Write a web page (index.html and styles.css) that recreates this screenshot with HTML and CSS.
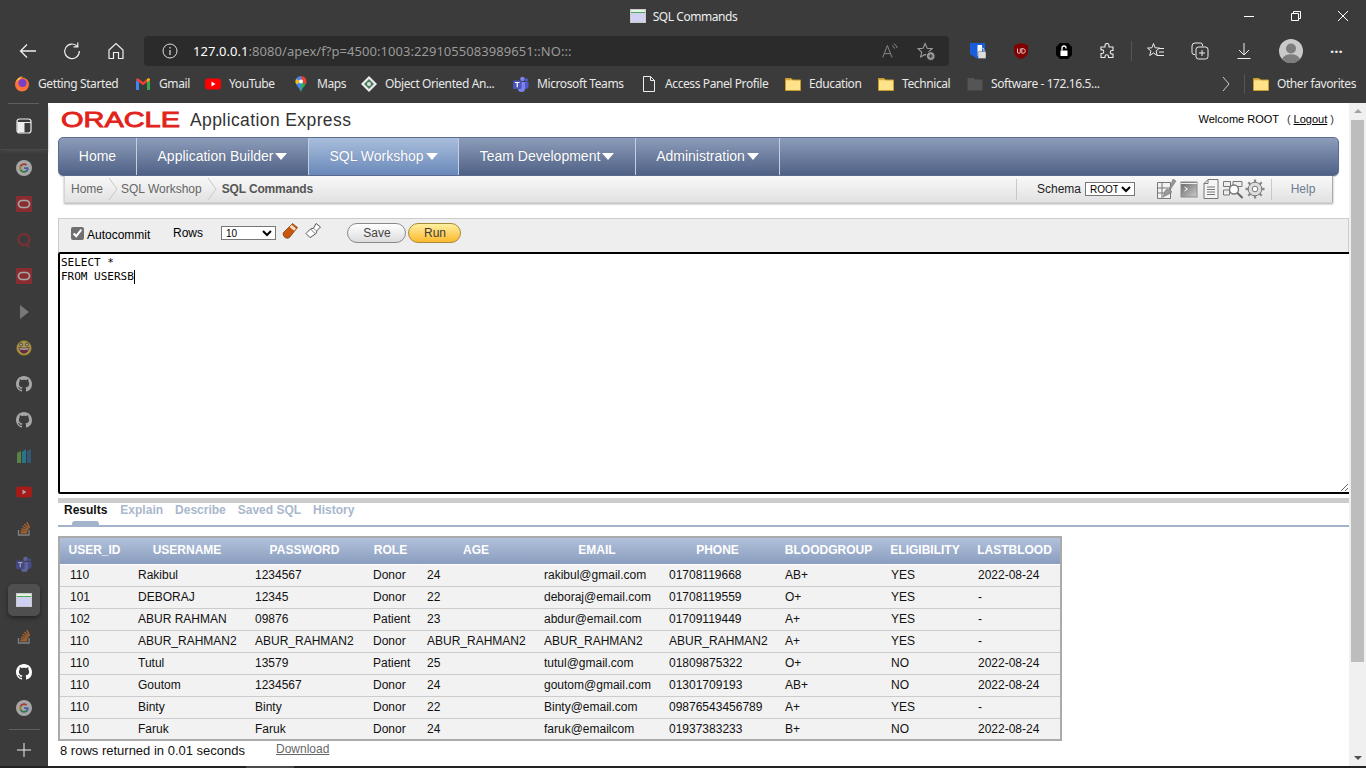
FILE: index.html
```html
<!DOCTYPE html>
<html lang="en">
<head>
<meta charset="utf-8">
<title>SQL Commands</title>
<link rel="stylesheet" href="styles.css">
</head>
<body>
<svg class="defs" width="0" height="0" aria-hidden="true">
  <defs>
    <symbol id="gh" viewBox="0 0 16 16"><path fill="#fff" d="M8 0C3.58 0 0 3.58 0 8c0 3.54 2.29 6.53 5.47 7.59.4.07.55-.17.55-.38 0-.19-.01-.82-.01-1.49-2.01.37-2.53-.49-2.69-.94-.09-.23-.48-.94-.82-1.13-.28-.15-.68-.52-.01-.53.63-.01 1.08.58 1.23.82.72 1.21 1.87.87 2.33.66.07-.52.28-.87.51-1.07-1.78-.2-3.64-.89-3.64-3.95 0-.87.31-1.59.82-2.15-.08-.2-.36-1.02.08-2.12 0 0 .67-.21 2.2.82.64-.18 1.32-.27 2-.27.68 0 1.36.09 2 .27 1.53-1.04 2.2-.82 2.2-.82.44 1.1.16 1.92.08 2.12.51.56.82 1.27.82 2.15 0 3.07-1.87 3.75-3.65 3.95.29.25.54.73.54 1.48 0 1.07-.01 1.93-.01 2.2 0 .21.15.46.55.38A8.013 8.013 0 0016 8c0-4.42-3.58-8-8-8z"/></symbol>
    <symbol id="ora" viewBox="0 0 16 16"><rect width="16" height="16" fill="#c8232c"/><rect x="2.5" y="4.5" width="11" height="7" rx="3.5" fill="none" stroke="#fff" stroke-width="1.7"/></symbol>
    <symbol id="goog" viewBox="0 0 16 16"><circle cx="8" cy="8" r="8" fill="#fff"/><path d="M12.6 8.2c0-.4 0-.7-.1-1H8v1.9h2.6c-.1.6-.5 1.2-1 1.5l1.6 1.2c.9-.9 1.4-2.1 1.4-3.6z" fill="#4285f4"/><path d="M8 12.8c1.3 0 2.4-.4 3.2-1.2l-1.6-1.2c-.4.3-1 .5-1.6.5-1.2 0-2.3-.8-2.7-2L3.700 10.100C4.500 11.700 6.100 12.800 8 12.800z" fill="#34a853"/><path d="M5.300 8.900c-.2-.6-.2-1.200 0-1.800L3.700 5.900c-.7 1.300-.7 2.900 0 4.200z" fill="#fbbc05"/><path d="M8 5.100c.7 0 1.300.2 1.800.7l1.400-1.400C10.300 3.600 9.200 3.200 8 3.200c-1.900 0-3.500 1.100-4.300 2.700l1.600 1.200c.4-1.200 1.500-2 2.700-2z" fill="#ea4335"/></symbol>
    <symbol id="so" viewBox="0 0 16 16"><path d="M2.500 10v5h10.500v-5" fill="none" stroke="#bcbbbb" stroke-width="1.300"/><path d="M4.500 12.800h6.500M4.700 10.800l6.400.8M5.300 8.600l6.200 1.800M6.500 6.200l5.600 3.300M8.400 4l4.500 4.500M10.800 2.200l2.900 5.400" fill="none" stroke="#f48024" stroke-width="1.400"/></symbol>
    <symbol id="folder" viewBox="0 0 16 16"><path d="M.5 2.500h5.500l1.500 1.500h8v10.500H.5z" fill="#ffe38b" stroke="#c99a2e"/><path d="M1 2.800h4.800l1.500 1.500H1z" fill="#d9a93a"/></symbol>
    <symbol id="win" viewBox="0 0 16 16"><rect x=".5" y="1.500" width="15" height="13" fill="#d8d8ee" stroke="#c9c9c9"/><rect x="1" y="2" width="14" height="2" fill="#e6f2e2"/><rect x="1" y="4" width="14" height="1" fill="#4ea65a"/><rect x="1.500" y="5" width="13" height="9" fill="#d0d0f2"/></symbol>
    <symbol id="teams" viewBox="0 0 16 16"><circle cx="9.500" cy="3" r="2.300" fill="#7b83eb"/><circle cx="13.500" cy="4" r="1.700" fill="#5059c9"/><path d="M11 6h4.500v4.500a2.500 2.500 0 01-4.500 1.500z" fill="#5059c9"/><path d="M5 6h7v6.500a3.500 3.500 0 01-7 0z" fill="#7b83eb"/><rect x="0" y="4.500" width="8.500" height="8.500" rx="1" fill="#4b53bc"/><path d="M2 6.500h4.500M4.250 6.500v4.800" stroke="#fff" stroke-width="1.200"/></symbol>
  </defs>
</svg>

<div class="app">
  <header class="titlebar">
    <div class="title-center">
      <svg class="ico16" viewBox="0 0 16 16"><use href="#win"/></svg>
      <span>SQL Commands</span>
    </div>
    <div class="winctl">
      <svg class="ctl" viewBox="0 0 12 12"><path d="M1 6.500h10" stroke="#fff" fill="none"/></svg>
      <svg class="ctl" viewBox="0 0 12 12"><path d="M1.500 3.500h7v7h-7zM3.500 3.500v-2h7v7h-2" stroke="#fff" fill="none"/></svg>
      <svg class="ctl" viewBox="0 0 12 12"><path d="M1 1l10 10M11 1L1 11" stroke="#fff" fill="none"/></svg>
    </div>
  </header>

  <div class="toolbar">
    <div class="navbtns">
      <svg class="tb" viewBox="0 0 20 20"><path d="M18 10H3M9 3.500L2.500 10 9 16.500" stroke="#eee" stroke-width="1.300" fill="none"/></svg>
      <svg class="tb" viewBox="0 0 20 20"><path d="M15.500 5.500A7.300 7.300 0 1017.300 10M15.800 1.500v4.300h-4.300" stroke="#eee" stroke-width="1.200" fill="none"/></svg>
      <svg class="tb" viewBox="0 0 20 20"><path d="M3 9l7-6.500L17 9v8.500h-4.500v-6h-5v6H3z" stroke="#eee" stroke-width="1.200" fill="none"/></svg>
    </div>
    <div class="address">
      <svg class="ico16 info" viewBox="0 0 16 16"><circle cx="8" cy="8" r="7" stroke="#ddd" fill="none"/><path d="M8 7v5M8 4v1.500" stroke="#ddd" stroke-width="1.200"/></svg>
      <span class="url"><b>127.0.0.1</b>:8080/apex/f?p=4500:1003:2291055083989651::NO:::</span>
      <svg class="tb addr-a" viewBox="0 0 20 20"><path d="M2 17L7.500 3 13 17M4 12.500h7M13 3a5 5 0 013 3.500M15 .8a7.500 7.500 0 014 5" stroke="#8c8c8c" stroke-width="1.100" fill="none"/></svg>
      <svg class="tb addr-f" viewBox="0 0 20 20"><path d="M8.500 1.500l2.200 5 5.300.5-4 3.600 1.200 5.200-4.700-2.700-4.700 2.700 1.200-5.200-4-3.600 5.300-.5z" stroke="#a0a0a0" stroke-width="1.100" fill="none"/><circle cx="14.500" cy="14.800" r="4.600" fill="#9a9a9a" stroke="#2b2b2b"/><path d="M12.300 14.800h4.400M14.500 12.600v4.400" stroke="#2b2b2b"/></svg>
    </div>
    <div class="exts">
      <svg class="ext" viewBox="0 0 16 16"><path d="M0 0h15v11l-7.500 5L0 11z" fill="#175ddc"/><path d="M3 2h9v8l-4.500 3.200V2z" fill="#fff"/><rect x="8" y="8.500" width="8" height="7" rx="1" fill="#ddd" stroke="#555" stroke-width=".5"/><path d="M10 8.500V7a2 2 0 014 0v1.500" stroke="#ddd" fill="none"/></svg>
      <svg class="ext" viewBox="0 0 16 16"><path d="M8 0l7 2.200v6.300c0 3.500-3 6-7 7.500-4-1.500-7-4-7-7.500V2.200z" fill="#800000"/><path d="M4.500 5.500v3.500a1.400 1.400 0 002.800 0V5.500M8.800 5v5.300h1.200a2.300 2.300 0 000-4.600H8.800" stroke="#e8d0d0" stroke-width=".9" fill="none"/></svg>
      <svg class="ext" viewBox="0 0 16 16"><path d="M4 0h8l4 4v8l-4 4H4l-4-4V4z" fill="#000"/><rect x="4.500" y="7.500" width="7" height="5.500" fill="#fff"/><path d="M6 7.500V5a2 2 0 014 0v.5" stroke="#fff" stroke-width="1.300" fill="none"/></svg>
      <svg class="ext" viewBox="0 0 16 16"><path d="M6 2.500a2 2 0 014 0V4h4v3.500h-1a1.700 1.700 0 000 3.500h1v3.500H9.500v-1a1.700 1.700 0 00-3.500 0v1H2v-4h1a1.800 1.800 0 000-3.600H2V4h4z" stroke="#eee" stroke-width="1.100" fill="none"/></svg>
      <span class="vsep"></span>
      <svg class="ext lg" viewBox="0 0 18 18"><path d="M6.500 1.500l1.600 4.300 4.400.3-3.400 2.900 1.100 4.500-3.700-2.500-3.800 2.500 1.200-4.500L.5 6.100l4.400-.3zM12 6.500h5M12 10h5M10 13.500h7" stroke="#eee" fill="none"/></svg>
      <svg class="ext lg" viewBox="0 0 18 18"><path d="M4 12.500H3a2 2 0 01-2-2V4a3 3 0 013-3h5.500a2 2 0 012 2v1" stroke="#eee" fill="none"/><rect x="5" y="5" width="12" height="12" rx="2.500" stroke="#eee" fill="none"/><path d="M11 8v6M8 11h6" stroke="#eee"/></svg>
      <svg class="ext lg" viewBox="0 0 18 18"><path d="M9 1v11.500M4 8l5 5 5-5M2.500 16.500h13" stroke="#eee" fill="none"/></svg>
      <svg class="avatar" viewBox="0 0 24 24"><circle cx="12" cy="12" r="12" fill="#c9c9c9"/><circle cx="12" cy="9.500" r="5" fill="#7d7d7d"/><path d="M3 20a9.500 7 0 0118 0 12 12 0 01-18 0z" fill="#7d7d7d"/></svg>
      <span class="more">···</span>
    </div>
  </div>

  <nav class="bookmarks">
    <div class="bm-list">
      <a class="bm"><svg class="ico16" viewBox="0 0 16 16"><circle cx="8" cy="8.500" r="7" fill="#ff7139"/><circle cx="8.500" cy="7" r="4" fill="#7a3fc4"/><path d="M2 6c1-4 4-5.500 7-5.500-2 1-3 2-3 3-2 .5-3 1-4 2.500z" fill="#ffbd4f"/></svg><span>Getting Started</span></a>
      <a class="bm"><svg class="ico16" viewBox="0 0 16 16"><path d="M1 14V4l3 2v8z" fill="#4285f4"/><path d="M12 14V6l3-2v10z" fill="#34a853"/><path d="M1 4c0-1.500 1.500-2 2.500-1.300L8 6l4.500-3.300C13.500 2 15 2.500 15 4l-7 5.200z" fill="#ea4335"/><path d="M12 6l3-2c0-1-.5-1.800-1.500-1.800L12 3z" fill="#fbbc04"/></svg><span>Gmail</span></a>
      <a class="bm"><svg class="ico16" viewBox="0 0 16 16"><rect y="2.500" width="16" height="11" rx="3" fill="#f00"/><path d="M6.500 5.500v5l4-2.500z" fill="#fff"/></svg><span>YouTube</span></a>
      <a class="bm"><svg class="ico16" viewBox="0 0 16 16"><path d="M8 0a5.500 5.500 0 00-5.500 5.500C2.500 9 6 11 8 16z" fill="#4285f4"/><path d="M8 0a5.500 5.500 0 015.500 5.500c0 1-.3 2-.8 2.800L8 5.500z" fill="#ea4335"/><path d="M12.700 8.300C11.500 10.500 9 12.500 8 16V5.500z" fill="#34a853"/><path d="M3 3L8 5.500 3.300 8.300A5.500 5.500 0 013 3z" fill="#fbbc04"/><circle cx="8" cy="5.500" r="2" fill="#fff"/></svg><span>Maps</span></a>
      <a class="bm"><svg class="ico16" viewBox="0 0 16 16"><path d="M8 0l8 8-8 8-8-8z" fill="#eee"/><path d="M8 3l5 5-5 5-5-5z" fill="#4c7c5e"/><circle cx="8" cy="8" r="2" fill="#ddd"/></svg><span>Object Oriented An...</span></a>
      <a class="bm"><svg class="ico16" viewBox="0 0 16 16"><use href="#teams"/></svg><span>Microsoft Teams</span></a>
      <a class="bm"><svg class="ico16" viewBox="0 0 16 16"><path d="M2.500.5h7l4 4v11h-11zM9.500.5v4h4" stroke="#eee" fill="none"/></svg><span>Access Panel Profile</span></a>
      <a class="bm"><svg class="ico16" viewBox="0 0 16 16"><use href="#folder"/></svg><span>Education</span></a>
      <a class="bm"><svg class="ico16" viewBox="0 0 16 16"><use href="#folder"/></svg><span>Technical</span></a>
      <a class="bm"><svg class="ico16" viewBox="0 0 16 16"><path d="M.5 2h6l1.500 1.500h7.500v11H.5z" fill="#555"/></svg><span>Software - 172.16.5...</span></a>
    </div>
    <div class="bm-right">
      <svg class="chev" viewBox="0 0 8 16"><path d="M1 1l6 7-6 7" stroke="#ccc" fill="none"/></svg>
      <span class="vsep bm-sep"></span>
      <a class="bm"><svg class="ico16" viewBox="0 0 16 16"><use href="#folder"/></svg><span>Other favorites</span></a>
    </div>
  </nav>

  <div class="body">
    <aside class="sidebar">
      <div class="side-top">
        <svg class="side-win" viewBox="0 0 16 16"><rect x="1" y="1" width="14" height="14" rx="2.500" fill="none" stroke="#eee" stroke-width="1.200"/><rect x="1.500" y="4.500" width="7" height="10" fill="#eee"/><path d="M1 4.500h14" stroke="#eee"/></svg>
      </div>
      <div class="tabs">
        <div class="tabi dim"><svg class="ico16" viewBox="0 0 16 16"><use href="#goog"/></svg></div>
        <div class="tabi dim"><svg class="ico16" viewBox="0 0 16 16"><use href="#ora"/></svg></div>
        <div class="tabi dim"><svg class="ico16 dimmer" viewBox="0 0 16 16"><circle cx="8" cy="7.500" r="5.500" fill="none" stroke="#c8232c" stroke-width="2.400"/><path d="M10 12l3 3" stroke="#c8232c" stroke-width="2.400"/></svg></div>
        <div class="tabi dim"><svg class="ico16" viewBox="0 0 16 16"><use href="#ora"/></svg></div>
        <div class="tabi dim"><svg class="ico16" viewBox="0 0 16 16"><path d="M4 1l9 7-9 7z" fill="#aaa"/></svg></div>
        <div class="tabi dim"><svg class="ico16" viewBox="0 0 16 16"><circle cx="8" cy="8" r="7.500" fill="#ffe14d" stroke="#8f7a10" stroke-width=".6"/><path d="M2.500 7c.5 4 2.800 6.500 5.500 6.500S13 11 13.500 7c-3.500 1-7.500 1-11 0z" fill="#8a1c4a"/><path d="M3.500 8c3 .6 6 .6 9 0v1.500c-3 .5-6 .5-9 0z" fill="#fff"/><circle cx="5" cy="4.500" r="1.500" fill="#fff" stroke="#000" stroke-width=".6"/><circle cx="11" cy="4.500" r="1.500" fill="#fff" stroke="#000" stroke-width=".6"/></svg></div>
        <div class="tabi dim"><svg class="ico16" viewBox="0 0 16 16"><use href="#gh"/></svg></div>
        <div class="tabi dim"><svg class="ico16" viewBox="0 0 16 16"><use href="#gh"/></svg></div>
        <div class="tabi dim"><svg class="ico16" viewBox="0 0 16 16"><path d="M1 5l4-2v12H1z" fill="#6fbf4f"/><path d="M6 4l4-3v14H6z" fill="#21a6c9"/><path d="M11 3l4-2v14h-4z" fill="#2c6fa8"/></svg></div>
        <div class="tabi dim"><svg class="ico16" viewBox="0 0 16 16"><rect y="2.500" width="16" height="11" rx="3" fill="#f00"/><path d="M6.500 5.500v5l4-2.500z" fill="#fff"/></svg></div>
        <div class="tabi dim"><svg class="ico16" viewBox="0 0 16 16"><use href="#so"/></svg></div>
        <div class="tabi dim"><svg class="ico16" viewBox="0 0 16 16"><use href="#teams"/></svg></div>
        <div class="tabi active"><svg class="ico16" viewBox="0 0 16 16"><use href="#win"/></svg></div>
        <div class="tabi dim"><svg class="ico16" viewBox="0 0 16 16"><use href="#so"/></svg></div>
        <div class="tabi"><svg class="ico16" viewBox="0 0 16 16"><use href="#gh"/></svg></div>
        <div class="tabi dim"><svg class="ico16" viewBox="0 0 16 16"><use href="#goog"/></svg></div>
      </div>
      <div class="side-sep"></div>
      <svg class="side-plus" viewBox="0 0 14 14"><path d="M0 7h14M7 0v14" stroke="#eee" fill="none"/></svg>
    </aside>

    <main class="page">
      <div class="topline">
        <div class="brand">
          <svg class="logo" viewBox="0 0 119 17"><text x="0" y="16" textLength="119" lengthAdjust="spacingAndGlyphs" class="logo-text">ORACLE</text></svg>
          <span class="appname">Application Express</span>
        </div>
        <div class="welcome">Welcome ROOT <span class="paren">( <a class="logout">Logout</a> )</span></div>
      </div>

      <div class="mainnav">
        <a class="ni ni-home">Home</a>
        <a class="ni ni-ab">Application Builder<i class="caret"></i></a>
        <a class="ni ni-sql on">SQL Workshop<i class="caret"></i></a>
        <a class="ni ni-team">Team Development<i class="caret"></i></a>
        <a class="ni ni-admin">Administration<i class="caret"></i></a>
      </div>

      <div class="crumbs">
        <div class="crumb-list">
          <a>Home</a><svg class="cr" viewBox="0 0 10 24"><path d="M1 1l8 11-8 11" stroke="#c9c9c9" fill="none"/></svg>
          <a>SQL Workshop</a><svg class="cr" viewBox="0 0 10 24"><path d="M1 1l8 11-8 11" stroke="#c9c9c9" fill="none"/></svg>
          <strong>SQL Commands</strong>
        </div>
        <div class="crumb-tools">
          <span class="crumb-vsep"></span>
          <label class="schema">Schema <select class="sel-schema"><option>ROOT</option></select></label>
          <div class="cicons">
            <svg class="ci" viewBox="0 0 20 20"><path d="M.5 3.500h13v16H.5zM.5 9h13M.5 14h13M5 3.500v16" stroke="#777" fill="#f2f2f2"/><path d="M16 0l3 2-6 9 2 2-3 2-6 3 2-6 2-2 2 1z" fill="#999" stroke="#666" stroke-width=".5"/></svg>
            <svg class="ci" viewBox="0 0 20 20"><defs><linearGradient id="term" x1="0" x2="1" y1="0" y2="1"><stop offset="0" stop-color="#666"/><stop offset="1" stop-color="#ccc"/></linearGradient></defs><rect x="2" y="3" width="16" height="15" fill="url(#term)" stroke="#888"/><path d="M2 4.500h16" stroke="#eee"/><path d="M5.500 8l3 2-3 2" stroke="#fff" fill="none"/></svg>
            <svg class="ci" viewBox="0 0 20 20"><path d="M7 .5h10v19H3V4.500zM7 .5v4H3M6 8h8M6 10.500h8M6 13h8M6 15.500h8" stroke="#777" fill="#f5f5f5"/></svg>
            <svg class="ci" viewBox="0 0 20 20"><path d="M.5 2.500h7v5h-7zM10 2.500h9v5h-9zM.5 11h6v5h-6z" stroke="#777" fill="#eee"/><circle cx="11" cy="10.500" r="4.500" fill="#fff" stroke="#777" stroke-width="1.400"/><path d="M14.500 14l5 5" stroke="#666" stroke-width="2"/></svg>
            <svg class="ci" viewBox="0 0 20 20"><circle cx="10" cy="10" r="6.800" fill="#ddd" stroke="#777" stroke-width="1"/><circle cx="10" cy="10" r="2.800" fill="#fff" stroke="#777"/><path d="M10 .5v3M10 16.500v3M.5 10h3M16.500 10h3M3.300 3.300l2.200 2.200M14.500 14.500l2.200 2.200M3.300 16.700l2.200-2.200M14.500 5.500l2.200-2.200" stroke="#888" stroke-width="2.300"/></svg>
          </div>
          <span class="crumb-vsep"></span>
          <a class="help">Help</a>
        </div>
      </div>

      <div class="actions">
        <label class="auto"><input type="checkbox" checked class="chk"><span>Autocommit</span></label>
        <span class="rows-label">Rows</span>
        <select class="sel-rows"><option>10</option></select>
        <svg class="act-i eraser" viewBox="0 0 16 16"><path d="M10.500.5l5 4-8 10c-1 1-3 1-4.500 0S.5 11 1.500 9.500z" fill="#c8560f" stroke="#5a2a08" stroke-width=".6"/><path d="M9.500 1.800l4.500 3.700-1.800 2.200-4.500-3.700z" fill="#f3e2c4"/></svg>
        <svg class="act-i flash" viewBox="0 0 16 16"><path d="M11 .5l4.500 3.500-3.500 3.500-1 3L6 14l-1 .5L1 10.500 2 9.500 5.500 6l3-.8z" fill="#fff" stroke="#555"/><path d="M5.500 6l4.500 4.500M8.500 5.200l2.500 2.500" stroke="#777" fill="none"/></svg>
        <button class="btn btn-save" type="button">Save</button>
        <button class="btn btn-run" type="button">Run</button>
      </div>

      <div class="editor">SELECT *<br>FROM USERSB<span class="cursor"></span></div>

      <div class="grip"></div>
      <div class="tabs-sql">
        <a class="ts cur">Results</a>
        <a class="ts">Explain</a>
        <a class="ts">Describe</a>
        <a class="ts">Saved SQL</a>
        <a class="ts">History</a>
        <i class="notch"></i>
      </div>

      <table class="report">
        <colgroup>
          <col class="c1"><col class="c2"><col class="c3"><col class="c4"><col class="c5">
          <col class="c6"><col class="c7"><col class="c8"><col class="c9"><col class="c10">
        </colgroup>
        <thead>
          <tr><th>USER_ID</th><th>USERNAME</th><th>PASSWORD</th><th>ROLE</th><th>AGE</th><th>EMAIL</th><th>PHONE</th><th>BLOODGROUP</th><th>ELIGIBILITY</th><th>LASTBLOOD</th></tr>
        </thead>
        <tbody>
          <tr><td>110</td><td>Rakibul</td><td>1234567</td><td>Donor</td><td>24</td><td>rakibul@gmail.com</td><td>01708119668</td><td>AB+</td><td>YES</td><td>2022-08-24</td></tr>
          <tr><td>101</td><td>DEBORAJ</td><td>12345</td><td>Donor</td><td>22</td><td>deboraj@email.com</td><td>01708119559</td><td>O+</td><td>YES</td><td>-</td></tr>
          <tr><td>102</td><td>ABUR RAHMAN</td><td>09876</td><td>Patient</td><td>23</td><td>abdur@email.com</td><td>01709119449</td><td>A+</td><td>YES</td><td>-</td></tr>
          <tr><td>110</td><td>ABUR_RAHMAN2</td><td>ABUR_RAHMAN2</td><td>Donor</td><td>ABUR_RAHMAN2</td><td>ABUR_RAHMAN2</td><td>ABUR_RAHMAN2</td><td>A+</td><td>YES</td><td>-</td></tr>
          <tr><td>110</td><td>Tutul</td><td>13579</td><td>Patient</td><td>25</td><td>tutul@gmail.com</td><td>01809875322</td><td>O+</td><td>NO</td><td>2022-08-24</td></tr>
          <tr><td>110</td><td>Goutom</td><td>1234567</td><td>Donor</td><td>24</td><td>goutom@gmail.com</td><td>01301709193</td><td>AB+</td><td>NO</td><td>2022-08-24</td></tr>
          <tr><td>110</td><td>Binty</td><td>Binty</td><td>Donor</td><td>22</td><td>Binty@email.com</td><td>09876543456789</td><td>A+</td><td>YES</td><td>-</td></tr>
          <tr><td>110</td><td>Faruk</td><td>Faruk</td><td>Donor</td><td>24</td><td>faruk@emailcom</td><td>01937383233</td><td>B+</td><td>NO</td><td>2022-08-24</td></tr>
        </tbody>
      </table>

      <div class="result-foot">
        <span class="rcount">8 rows returned in 0.01 seconds</span>
        <a class="download">Download</a>
      </div>
    </main>

    <div class="vscroll">
      <i class="arrow up"></i>
      <div class="track"><div class="thumb"></div></div>
      <i class="arrow down"></i>
    </div>
  </div>
  <div class="bottombar"><i class="bottom-seg"></i></div>
</div>
</body>
</html>
```
FILE: styles.css
```css
* { box-sizing: border-box; }
html, body { margin: 0; padding: 0; height: 100%; overflow: hidden; }
body { background: #3b3b3b; font-family: "Liberation Sans", Arial, sans-serif; color: #000; }
a { cursor: pointer; }
.defs { position: absolute; }
.app { width: 1366px; height: 768px; display: flex; flex-direction: column; overflow: hidden; }
.ico16 { width: 16px; height: 16px; flex: none; display: block; }

/* Browser chrome */
.titlebar { height: 36px; flex: none; background: #3b3b3b; position: relative; display: flex; justify-content: center; padding-top: 8px; }
.title-center { display: flex; gap: 7px; align-items: flex-start; color: #eee; font: 12px/17px "Noto Sans", sans-serif; letter-spacing: -.45px; margin-left: 1px; }
.winctl { position: absolute; right: 0; top: 10px; display: flex; gap: 35px; padding-right: 17px; }
.ctl { width: 12px; height: 12px; display: block; }
.toolbar { height: 30px; flex: none; display: flex; align-items: center; }
.navbtns { width: 144px; flex: none; display: flex; padding-left: 18px; gap: 24px; align-items: center; }
.tb { width: 20px; height: 20px; flex: none; display: block; }
.address { width: 805px; height: 30px; flex: none; background: #2b2b2b; border-radius: 4px; display: flex; align-items: center; padding-left: 18px; }
.info { margin-right: 16px; }
.url { color: #9a9a9a; font: 13px/30px "Noto Sans", sans-serif; width: 687px; flex: none; white-space: nowrap; letter-spacing: .05px; margin-left: -1px; }
.url b { color: #fff; font-weight: 400; }
.addr-a { margin-left: 1px; width: 17px; height: 17px; }
.addr-f { margin-left: 19px; width: 19px; height: 19px; }
.exts { display: flex; align-items: center; flex: 1; padding-left: 21px; }
.ext { width: 16px; height: 16px; flex: none; display: block; margin-right: 27px; }
.ext.lg { width: 18px; height: 18px; margin-right: 26px; }
.vsep { width: 1px; height: 20px; background: #555; flex: none; margin: 0 15px 0 -11px; }
.avatar { width: 24px; height: 24px; flex: none; }
.more { color: #eee; font: 700 15px/16px "Noto Sans", sans-serif; margin-left: 27px; }
.bookmarks { height: 37px; flex: none; display: flex; align-items: center; justify-content: space-between; padding: 0 10px 2px 14px; color: #e8e8e8; font: 12px/16px "Noto Sans", sans-serif; letter-spacing: -.4px; }
.bm-list { display: grid; grid-template-columns: 121px 70px 88px 68px 152px 128px 144px 93px 89px 200px; }
.bm { display: flex; align-items: center; gap: 8px; white-space: nowrap; }
.bm-right { display: flex; align-items: center; }
.chev { width: 8px; height: 16px; margin-right: 14px; }
.bm-sep { margin: 0 8px 0 0; }

/* Layout */
.body { flex: 1; display: flex; min-height: 0; }
.sidebar { width: 48px; flex: none; background: #3b3b3b; display: flex; flex-direction: column; align-items: center; }
.side-top { height: 47px; width: 48px; flex: none; border-bottom: 1px solid #4a4a4a; box-shadow: 0 3px 3px -1px #464646; display: flex; align-items: center; justify-content: center; position: relative; }
.side-top::before { content: ""; position: absolute; top: 0; left: 8px; width: 31px; height: 1px; background: #5f5f5f; }
.side-win { width: 16px; height: 16px; display: block; }
.tabs { display: flex; flex-direction: column; }
.tabi { width: 32px; height: 36px; display: flex; align-items: center; justify-content: center; }
.tabi.dim .ico16 { opacity: .55; }
.tabi.dim .ico16.dimmer { opacity: .4; }
.tabi.active { background: #4f4f4f; border-radius: 5px; height: 32px; margin: 2px 0; box-shadow: 0 2px 4px rgba(0,0,0,.4); }
.side-sep { width: 31px; height: 1px; background: #5f5f5f; flex: none; margin-top: 3px; }
.side-plus { width: 14px; height: 14px; margin-top: 13px; display: block; }
.page { width: 1301px; flex: none; background: #fff; overflow: hidden; display: flex; flex-direction: column; padding-left: 10px; }
.vscroll { width: 17px; flex: none; background: #f0f0f0; display: flex; flex-direction: column; align-items: center; padding: 6px 0; }
.arrow { width: 0; height: 0; border-left: 4px solid transparent; border-right: 4px solid transparent; flex: none; }
.arrow.up { border-bottom: 4px solid #a3a3a3; }
.arrow.down { border-top: 4px solid #505050; }
.track { flex: 1; width: 13px; padding-top: 7px; }
.thumb { height: 542px; background: #bdbdbd; }
.bottombar { height: 2px; flex: none; background: #222; position: relative; }
.bottom-seg { position: absolute; left: 246px; top: 0; width: 48px; height: 2px; background: #4a4a4a; }

/* Header */
.topline { height: 34px; flex: none; display: flex; justify-content: space-between; margin-right: 15px; }
.brand { display: flex; align-items: flex-start; padding: 8px 0 0 3px; }
.logo { width: 119px; height: 17px; display: block; overflow: visible; }
.logo-text { font: 400 22px "Liberation Sans", sans-serif; fill: #e2231a; stroke: #e2231a; stroke-width: .9; }
.appname { font-size: 17.500px; line-height: 18px; margin-left: 10px; color: #333; letter-spacing: .4px; }
.welcome { font-size: 11px; line-height: 14px; padding-top: 9px; color: #000; }
.paren { margin-left: 5px; color: #333; }
.logout { color: #000; text-decoration: underline; }

/* Main nav */
.mainnav { width: 1281px; height: 39px; flex: none; border-radius: 5px; background: linear-gradient(#8c9cba, #4f6186); border: 1px solid #5b6e91; display: flex; color: #fff; font-size: 14px; box-shadow: 0 1px 1px rgba(0,0,0,.2); }
.ni { display: flex; align-items: center; justify-content: center; border-right: 1px solid #c4cede; height: 37px; flex: none; padding-bottom: 2px; text-shadow: 0 0 1px rgba(0,0,0,.2); }
.ni-home { width: 78px; border-radius: 5px 0 0 5px; }
.ni-ab { width: 172px; }
.ni-sql { width: 150px; }
.ni-team { width: 177px; }
.ni-admin { width: 144px; }
.ni.on { background: linear-gradient(#a9bedc, #6a89ba); }
.caret { width: 0; height: 0; border-left: 6px solid transparent; border-right: 6px solid transparent; border-top: 7px solid #fff; margin-left: 2px; margin-top: 1px; }

/* Breadcrumb */
.crumbs { width: 1269px; height: 27px; flex: none; margin-left: 6px; background: linear-gradient(#f9f9f9, #e2e2e2); border: 1px solid #d5d5d5; border-top: 0; border-right-color: #aaa; box-shadow: 0 1px 2px rgba(0,0,0,.35); display: flex; justify-content: space-between; align-items: center; font-size: 12px; color: #666; }
.crumb-list { display: flex; align-items: center; padding-left: 6px; }
.crumb-list strong { color: #555; margin-left: 2px; letter-spacing: -.15px; }
.cr { width: 10px; height: 24px; margin: 0 3px 0 5px; display: block; }
.crumb-tools { display: flex; align-items: center; height: 100%; }
.crumb-vsep { width: 1px; height: 21px; background: #c8c8c8; flex: none; }
.schema { display: flex; align-items: center; gap: 4px; color: #222; margin-left: 20px; width: 118px; }
.sel-schema { width: 50px; height: 14px; font: 10px "Liberation Sans", sans-serif; padding: 0; background: #fff; border: 1px solid #777; border-radius: 0; color: #000; }
.cicons { display: flex; gap: 2px; margin: 0 6px 0 2px; }
.ci { width: 20px; height: 20px; display: block; }
.help { width: 60px; padding-left: 2px; text-align: center; color: #6c7a90; }

/* SQL actions */
.actions { height: 34px; flex: none; margin-top: 15px; background: #eee; border: 1px solid #ccc; border-bottom: 0; display: flex; align-items: center; font-size: 12px; padding: 0 0 4px 12px; }
.auto { display: flex; align-items: center; gap: 3px; width: 102px; }
.chk { width: 13px; height: 13px; margin: 0; accent-color: #6f6f6f; }
.auto span { padding-top: 2px; }
.rows-label { width: 48px; padding-bottom: 2px; }
.sel-rows { width: 55px; height: 14px; margin-bottom: 1px; font: 10px "Liberation Sans", sans-serif; padding: 0; background: #fff; border: 1px solid #777; border-radius: 0; color: #000; }
.act-i { width: 16px; height: 16px; display: block; margin-bottom: 6px; }
.eraser { margin-left: 6px; }
.flash { margin-left: 7px; }
.btn { height: 20px; margin-bottom: 2px; border-radius: 10px; font: 12px "Liberation Sans", sans-serif; color: #444; padding: 0 0 0 1px; }
.btn-save { width: 59px; margin-left: 26px; background: linear-gradient(#fff, #dcdcdc); border: 1px solid #8a8a8a; }
.btn-run { width: 53px; margin-left: 2px; background: linear-gradient(#ffef9f, #fbb92e); border: 1px solid #a88a3a; color: #3c3c3c; }

/* Editor */
.editor { height: 242px; flex: none; margin-right: -2px; border: 2px solid #000; border-radius: 2px; padding: 2px 1px; font: 11px/14px "DejaVu Sans Mono", monospace; color: #000; resize: both; overflow: auto; background: #fff; }
.cursor { display: inline-block; width: 1px; height: 14px; background: #000; vertical-align: top; }

/* Tabs */
.grip { height: 5px; flex: none; background: #ccc; margin-top: 4px; }
.tabs-sql { height: 24px; flex: none; display: flex; align-items: flex-start; gap: 12px; border-bottom: 2px solid #a3b3cb; position: relative; padding: 0 0 0 6px; font: 700 12px/14px "Liberation Sans", sans-serif; color: #a9b7cd; }
.ts.cur { color: #111; margin-right: 1px; }
.notch { position: absolute; left: 14px; bottom: 0; width: 27px; height: 4px; background: #a3b3cb; border-radius: 3px 3px 0 0; }

/* Report */
.report { margin-top: 9px; width: 1002px; flex: none; border-collapse: collapse; table-layout: fixed; border: 2px solid #aaa; font-size: 12px; }
.c1 { width: 69px; } .c2 { width: 117px; } .c3 { width: 118px; } .c4 { width: 54px; } .c5 { width: 117px; }
.c6 { width: 125px; } .c7 { width: 116px; } .c8 { width: 106px; } .c9 { width: 87px; } .c10 { width: 93px; }
.report th { height: 27px; padding: 0 0 1px 1px; background: linear-gradient(#b1c1db, #8a9dbe); color: #fff; font-weight: 700; text-align: center; white-space: nowrap; border-bottom: 1px solid #fff; }
.report td { height: 22px; padding: 0 0 0 10px; background: #f2f2f2; border-bottom: 1px solid #ccc; white-space: nowrap; color: #111; }
.result-foot { display: flex; align-items: flex-start; padding: 2px 0 0 2px; }
.rcount { font-size: 13px; line-height: 16px; width: 216px; color: #111; }
.download { font-size: 12px; line-height: 13px; color: #666; text-decoration: underline; }
```
